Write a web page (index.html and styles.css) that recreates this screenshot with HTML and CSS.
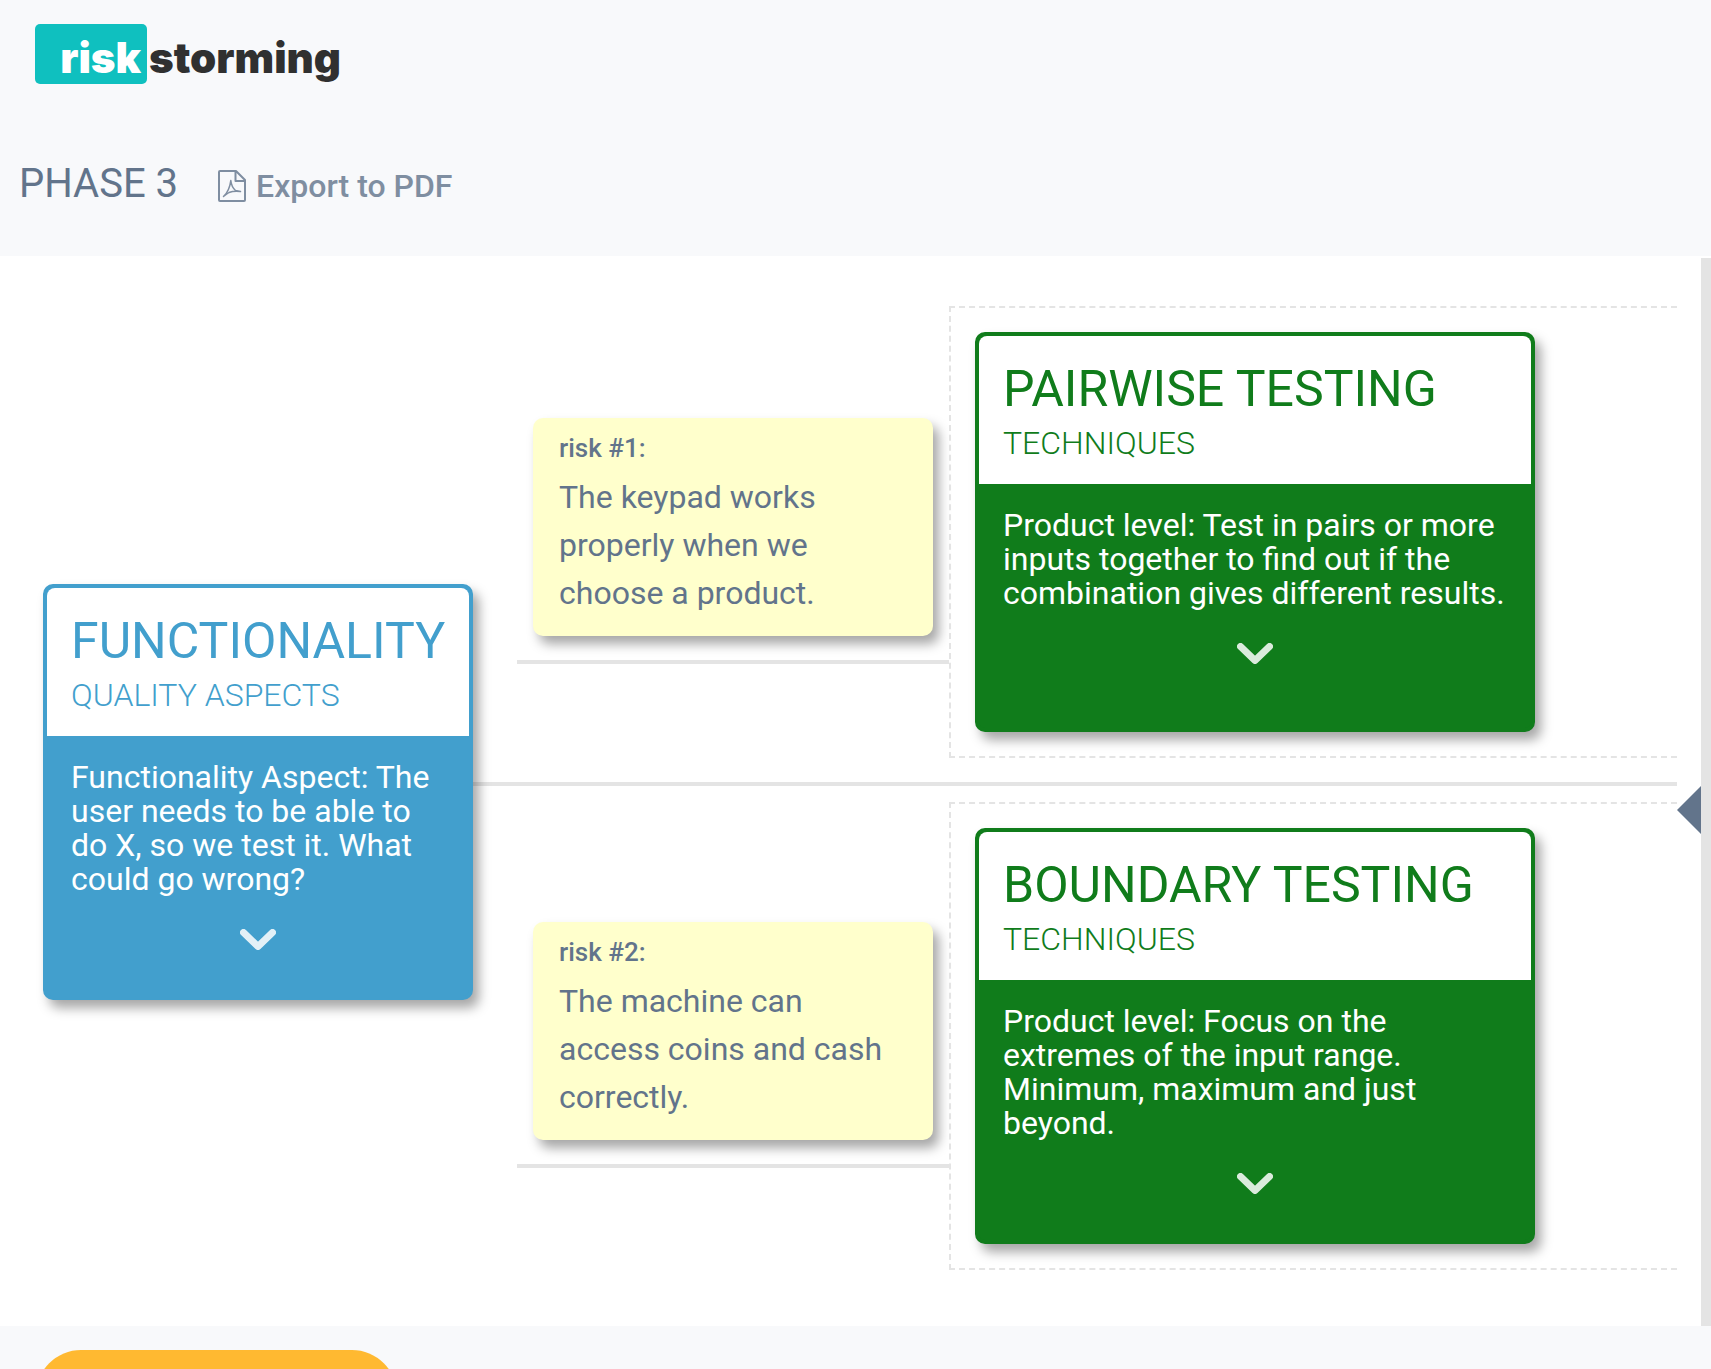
FILE: index.html
```html
<!DOCTYPE html>
<html lang="en">
<head>
    <meta charset="UTF-8">
    <meta name="viewport" content="width=device-width, initial-scale=1.0">
    <title>RiskStorming</title>
    <link rel="stylesheet" href="styles.css">
</head>
<body>
<header>
    <a href="#" class="logo"><span class="logo-risk">risk</span><span class="logo-storming">storming</span></a>
    <div class="phase-bar">
        <h1>PHASE 3</h1>
        <button class="export">
            <svg width="28" height="32" viewBox="0 0 28 32" fill="none" stroke="currentColor">
                <path stroke-width="2" stroke-linejoin="round" d="M18 1H2a1 1 0 0 0-1 1v28a1 1 0 0 0 1 1h24a1 1 0 0 0 1-1V10zM17.500 1v10H27"/>
                <path stroke-width="1.500" stroke-linecap="round" stroke-linejoin="round" d="M5.500 26.500Q11.500 21 12.800 10.500Q13.500 17 17.500 20.500L22.500 21.500Q16 20.500 11 22.500Q8 24.500 5.500 26.500"/>
            </svg>
            Export to PDF
        </button>
    </div>
</header>

<main class="board">
    <div class="aspect-col">
        <article class="card card-aspect">
            <div class="card-head">
                <h2>FUNCTIONALITY</h2>
                <p>QUALITY ASPECTS</p>
            </div>
            <div class="card-body">
                <p>Functionality Aspect: The user needs to be able to do X, so we test it. What could go wrong?</p>
                <button class="more" aria-label="Show more">
                    <svg width="36" height="21" viewBox="0 0 36 21"><path d="M3.500 3.500L18 17.500L32.500 3.500"/></svg>
                </button>
            </div>
        </article>
    </div>

    <div class="risks">
        <section class="risk">
            <div class="note-col">
                <div class="note">
                    <h3>risk #1:</h3>
                    <p>The keypad works properly when we choose a product.</p>
                </div>
            </div>
            <div class="drop-zone">
                <article class="card card-technique">
                    <div class="card-head">
                        <h2>PAIRWISE TESTING</h2>
                        <p>TECHNIQUES</p>
                    </div>
                    <div class="card-body">
                        <p>Product level: Test in pairs or more inputs together to find out if the combination gives different results.</p>
                        <button class="more" aria-label="Show more">
                            <svg width="36" height="21" viewBox="0 0 36 21"><path d="M3.500 3.500L18 17.500L32.500 3.500"/></svg>
                        </button>
                    </div>
                </article>
            </div>
        </section>

        <hr>

        <section class="risk">
            <div class="note-col">
                <div class="note">
                    <h3>risk #2:</h3>
                    <p>The machine can access coins and cash correctly.</p>
                </div>
            </div>
            <div class="drop-zone">
                <article class="card card-technique">
                    <div class="card-head">
                        <h2>BOUNDARY TESTING</h2>
                        <p>TECHNIQUES</p>
                    </div>
                    <div class="card-body">
                        <p>Product level: Focus on the extremes of the input range. Minimum, maximum and just beyond.</p>
                        <button class="more" aria-label="Show more">
                            <svg width="36" height="21" viewBox="0 0 36 21"><path d="M3.500 3.500L18 17.500L32.500 3.500"/></svg>
                        </button>
                    </div>
                </article>
            </div>
        </section>
    </div>

    <aside class="drawer">
        <button class="drawer-toggle" aria-label="Open panel"></button>
    </aside>
</main>

<footer>
    <button class="next" aria-label="Next"></button>
</footer>
</body>
</html>
```

FILE: styles.css
```css
:root {
    --bg: #f8f9fb;
    --slate: #62748b;
    --line: #e4e4e4;
    --aspect: #429fcd;
    --technique: #107c1b;
    --note: #ffffcc;
    --shadow: 6px 8px 12px rgba(0, 0, 0, 0.35);
}

* {
    box-sizing: border-box;
}

body {
    margin: 0;
    height: 100vh;
    overflow: hidden;
    background-color: var(--bg);
    color: var(--slate);
    font-family: Roboto, sans-serif;
    font-size: 32px;
}

h1, h2, h3, p {
    margin: 0;
    font-weight: 400;
}

button {
    border: none;
    padding: 0;
    background: none;
    color: inherit;
    font: inherit;
    cursor: pointer;
}

/* header */
header {
    padding: 24px 19px 48px;
}

.logo {
    display: inline-flex;
    margin-left: 16px;
    font-family: Inter, sans-serif;
    font-size: 42px;
    font-weight: 900;
    line-height: 68px;
    height: 60px;
    text-decoration: none;
}

.logo-risk {
    width: 112px;
    padding-right: 6px;
    border-radius: 5px;
    background-color: #0fc0bf;
    color: white;
    text-align: right;
}

.logo-storming {
    padding-left: 2px;
    color: #303030;
}

.phase-bar {
    display: flex;
    align-items: center;
    gap: 40px;
    margin-top: 76px;
}

h1 {
    font-size: 40px;
    line-height: 48px;
}

.export {
    display: flex;
    align-items: center;
    gap: 10px;
    padding-top: 4px;
    line-height: 40px;
    font-weight: 500;
    opacity: 0.8;
}

/* board */
.board {
    display: flex;
    background-color: white;
}

.aspect-col {
    flex: none;
    display: flex;
    align-items: center;
    width: 430px;
    margin: 58px 0 56px 43px;
    z-index: 1;
}

.risks {
    flex: 1;
    min-width: 0;
    padding: 50px 0 56px;
}

hr {
    height: 4px;
    margin: 24px 0 16px;
    border: none;
    background-color: var(--line);
}

.risk {
    display: flex;
    margin-left: 44px;
}

.note-col {
    flex: none;
    align-self: center;
    width: 432px;
    padding: 18px 16px 24px;
    border-bottom: 4px solid var(--line);
}

.note {
    padding: 17px 26px 19px;
    border-radius: 10px;
    background-color: var(--note);
    box-shadow: var(--shadow);
}

.note h3 {
    margin-bottom: 12px;
    font-size: 26px;
    line-height: 26px;
    font-weight: 500;
}

.note p {
    line-height: 48px;
}

.drop-zone {
    flex: 1;
    padding: 24px;
    border: 2px dashed var(--line);
    border-right: none;
}

/* cards */
.card {
    display: flex;
    flex-direction: column;
    width: 100%;
    min-height: 400px;
    border: 4px solid;
    border-radius: 10px;
    background-color: currentColor;
    box-shadow: var(--shadow);
}

.card-aspect {
    color: var(--aspect);
}

.card-technique {
    max-width: 560px;
    color: var(--technique);
}

.card-head {
    padding: 25px 24px 23px;
    border-radius: 8px 8px 0 0;
    background-color: white;
}

.card-head h2 {
    margin-bottom: 8px;
    font-size: 50px;
    line-height: 56px;
}

.card-head p {
    font-weight: 300;
    line-height: 36px;
}

.card-body {
    padding: 24px 24px 46px;
    color: white;
    line-height: 34px;
}

.more {
    display: block;
    margin: 33px auto 0;
}

.more svg {
    display: block;
    fill: none;
    stroke: currentColor;
    stroke-width: 7;
    stroke-linecap: round;
    stroke-linejoin: round;
    opacity: 0.85;
}

/* collapsed side panel */
.drawer {
    display: flex;
    align-items: center;
    margin-top: 2px;
    padding-top: 36px;
    border-right: 10px solid var(--line);
}

.drawer-toggle {
    width: 24px;
    height: 48px;
    background-color: var(--slate);
    clip-path: polygon(100% 0, 100% 100%, 0 50%);
}

/* footer */
footer {
    padding: 24px 36px;
}

.next {
    width: 361px;
    height: 90px;
    border-radius: 45px;
    background-color: #ffb931;
}
```
